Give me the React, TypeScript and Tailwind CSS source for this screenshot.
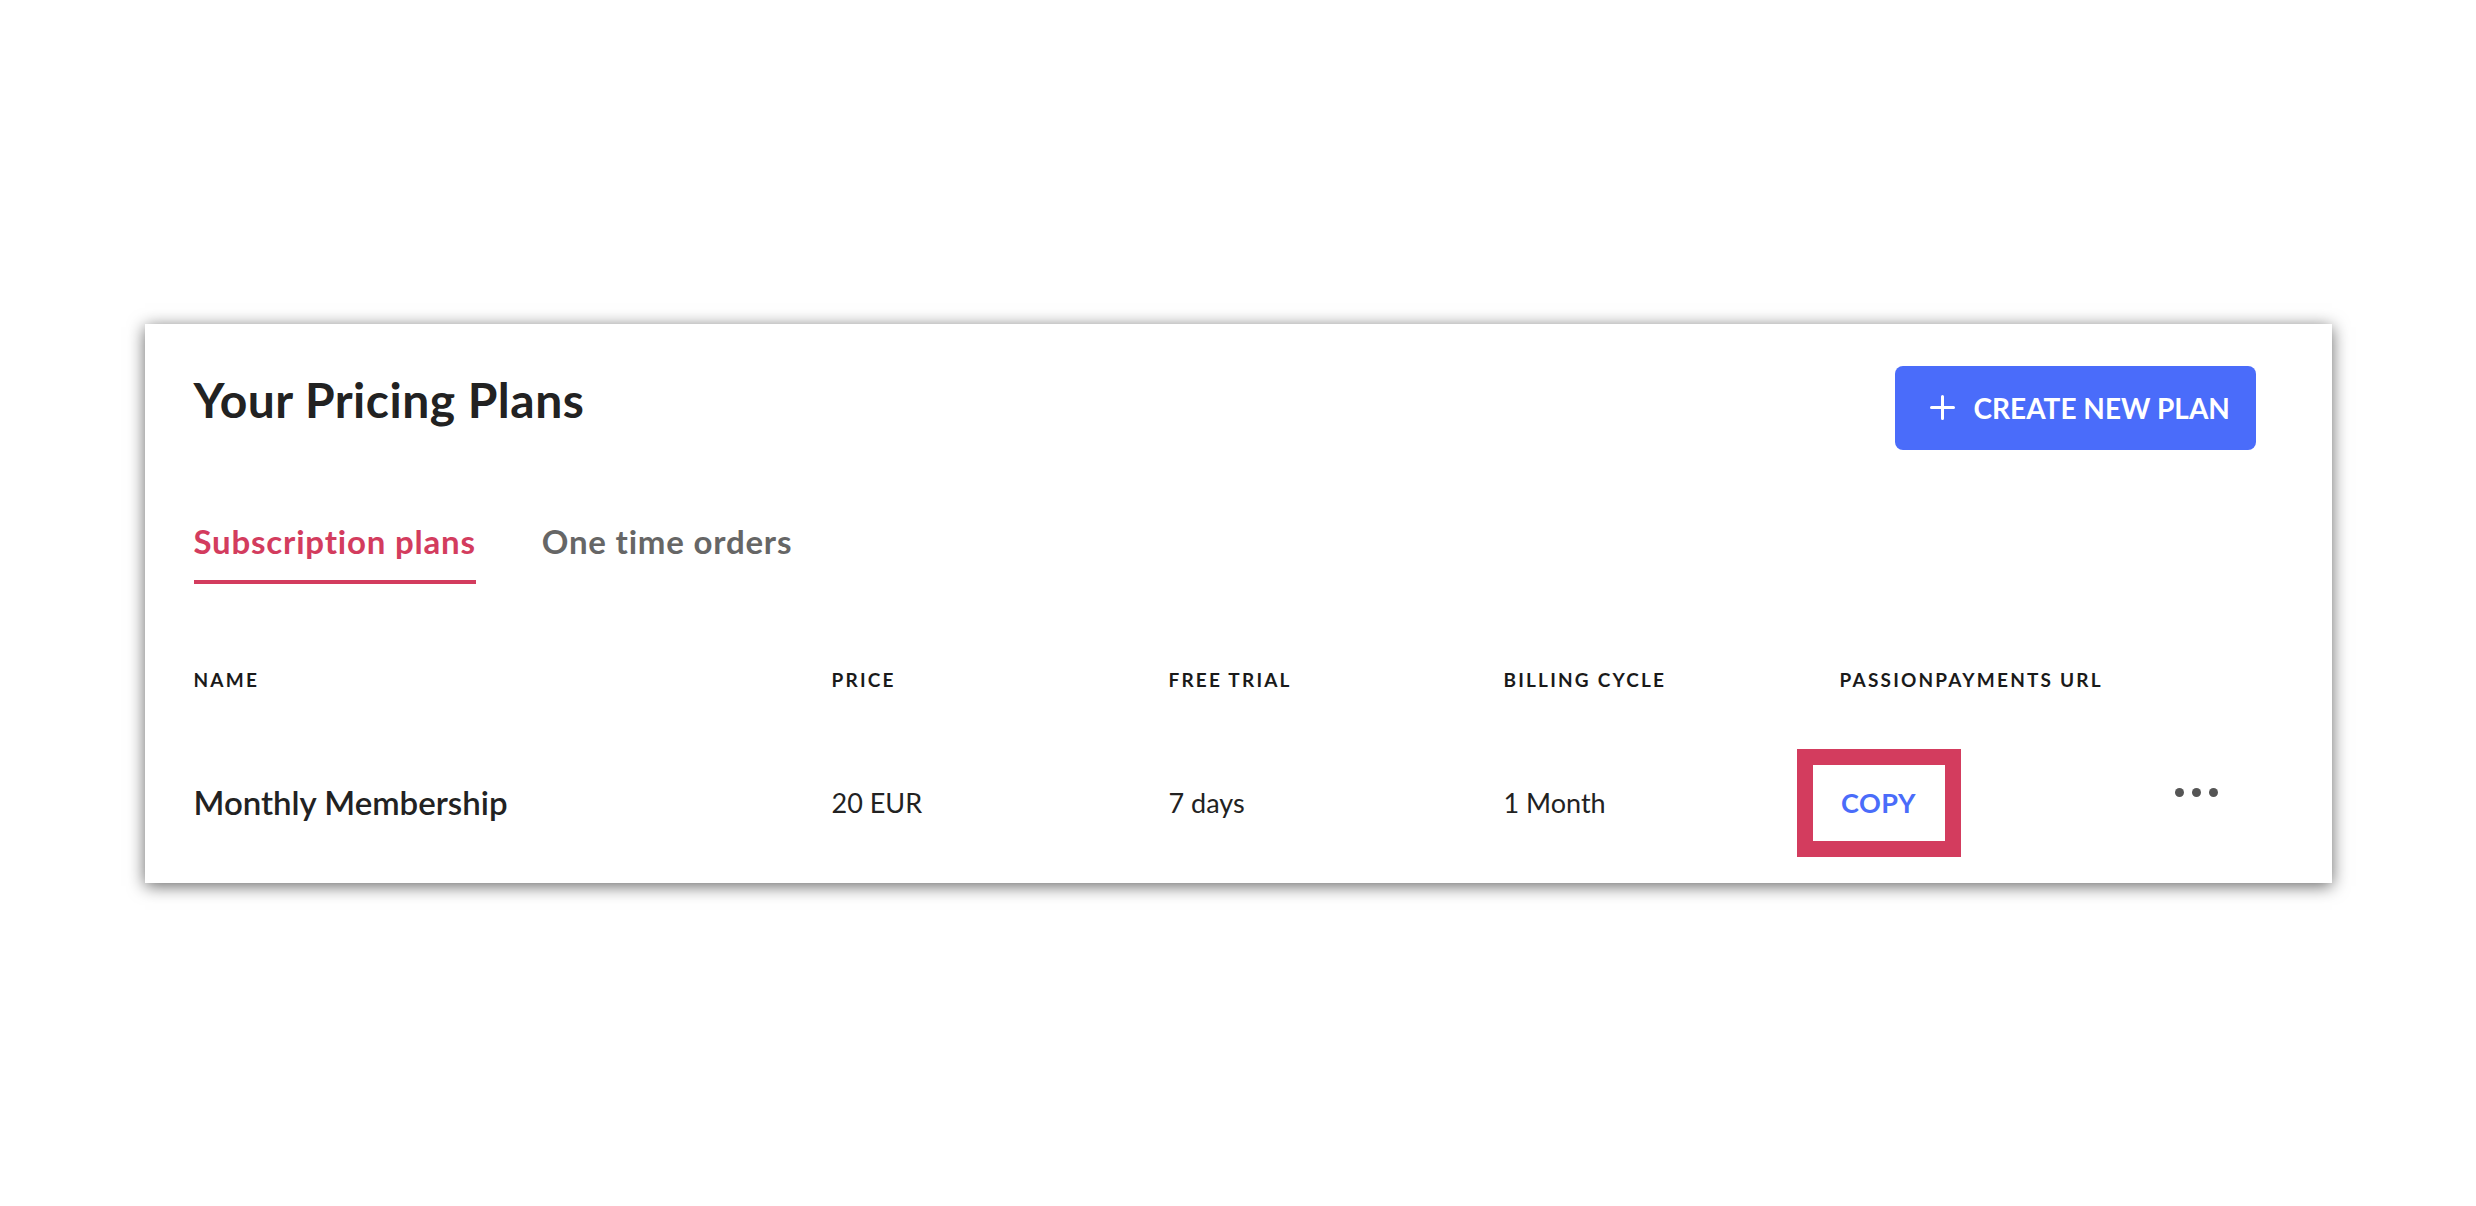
interface Plan {
  name: string;
  price: string;
  trial: string;
  cycle: string;
}

const plans: Plan[] = [
  { name: "Monthly Membership", price: "20 EUR", trial: "7 days", cycle: "1 Month" },
];

const columns = ["NAME", "PRICE", "FREE TRIAL", "BILLING CYCLE", "PASSIONPAYMENTS URL"];

const rowGrid = "grid grid-cols-[638px_337px_335px_336px_1fr] items-center";

const App = () => {
  return (
    <div className="min-h-screen w-full bg-white flex items-center justify-center font-['Lato',sans-serif] text-[#222]">
      <div className="w-[2187px] h-[559px] bg-white shadow-[0_3px_16px_rgba(0,0,0,0.6)] pl-[49px] pr-[76px] pt-[42px]">
        <div className="flex items-start justify-between">
          <h1 className="mt-[10px] text-[48px] leading-none font-bold tracking-[0.5px]">
            Your Pricing Plans
          </h1>
          <button className="h-[84px] w-[361px] rounded-[8px] bg-[#4a6cfa] text-white flex items-center pl-[35px]">
            <svg width="25" height="25" viewBox="0 0 25 25" className="shrink-0">
              <path d="M12.5 1.5v22M1.5 12.5h22" stroke="currentColor" strokeWidth="3" strokeLinecap="round" />
            </svg>
            <span className="ml-[19px] whitespace-nowrap text-[28px] leading-none font-bold">
              CREATE NEW PLAN
            </span>
          </button>
        </div>

        <div className="mt-[75px] flex items-start gap-[66px]">
          <div className="text-[33px] leading-none font-bold tracking-[0.8px] text-[#d33c5e] pb-[22px] border-b-4 border-[#d33c5e]">
            Subscription plans
          </div>
          <div className="text-[33px] leading-none font-bold tracking-[0.8px] text-[#666]">One time orders</div>
        </div>

        <div className={`${rowGrid} mt-[86px]`}>
          {columns.map((c) => (
            <div key={c} className="text-[19px] leading-none font-bold tracking-[2.2px] text-[#1a1a1a]">
              {c}
            </div>
          ))}
        </div>

        {plans.map((plan) => (
          <div key={plan.name} className={`${rowGrid} mt-[60px]`}>
            <div className="text-[33px] leading-none font-semibold">{plan.name}</div>
            <div className="text-[27px] leading-none">{plan.price}</div>
            <div className="text-[27px] leading-none">{plan.trial}</div>
            <div className="text-[27px] leading-none">{plan.cycle}</div>
            <div className="flex items-center justify-between">
              <div className="ml-[-43px] w-[164px] h-[108px] border-[16px] border-[#d33c5e] flex items-center justify-center">
                <span className="text-[27px] leading-none font-bold text-[#4a6cfa] tracking-[0.5px]">COPY</span>
              </div>
              <div className="flex items-center gap-[8px] mr-[38px] mb-[20px]">
                <span className="w-[9px] h-[9px] rounded-full bg-[#555]" />
                <span className="w-[9px] h-[9px] rounded-full bg-[#555]" />
                <span className="w-[9px] h-[9px] rounded-full bg-[#555]" />
              </div>
            </div>
          </div>
        ))}
      </div>
    </div>
  );
};

export default App;
